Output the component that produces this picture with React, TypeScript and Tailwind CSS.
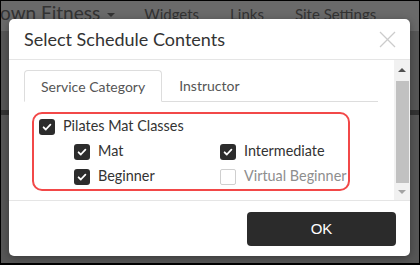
import React from 'react';

function Check({ checked }: { checked: boolean }): React.ReactElement {
  if (!checked) {
    return <span className="block w-[16px] h-[16px] rounded-[2px] border border-[#cfcfcf] bg-white shrink-0" />;
  }
  return (
    <span className="flex items-center justify-center w-[16px] h-[16px] rounded-[3px] bg-[#2c2c2c] shrink-0">
      <svg width="12" height="12" viewBox="0 0 12 12" fill="none" stroke="white" strokeWidth="1.8" strokeLinecap="round" strokeLinejoin="round">
        <path d="M2.6 6.3l2.2 2.2 4.6-4.8" />
      </svg>
    </span>
  );
}

function Item({ label, checked, muted }: { label: string; checked: boolean; muted?: boolean }): React.ReactElement {
  return (
    <label className="flex items-center gap-[8px] h-[25px] whitespace-nowrap">
      <Check checked={checked} />
      <span className={`text-[14.4px] leading-none ${muted ? 'text-[#8e8e8e]' : 'text-[#333]'}`}>{label}</span>
    </label>
  );
}

export default function App(): React.ReactElement {
  return (
    <div className="relative w-[420px] h-[265px] overflow-hidden border border-b-2 border-black bg-[#575757] font-['Lato',sans-serif]">
      {/* Page behind the modal */}
      <div className="h-[30px] bg-[#6a6a6a] flex items-start text-[#333] whitespace-nowrap">
        <span className="text-[19px] leading-[22px] ml-[-1px] mt-[1px]">own Fitness</span>
        <span className="ml-[7px] mt-[12px] w-0 h-0 border-l-[4px] border-r-[4px] border-t-[4px] border-l-transparent border-r-transparent border-t-[#333]" />
        <span className="ml-[29px] mt-[3px] text-[15px] leading-[20px]">Widgets</span>
        <span className="ml-[31px] mt-[3px] text-[15px] leading-[20px]">Links</span>
        <span className="ml-[31px] mt-[3px] text-[15px] leading-[20px]">Site Settings</span>
      </div>
      <div className="mt-[79px] h-[5px] bg-[#333]" />

      {/* Overlay + modal */}
      <div className="absolute inset-0 pl-[8px] pt-[18px]">
        <div className="w-[401px] h-[237px] bg-white rounded-[5px] shadow-[0_2px_8px_rgba(0,0,0,0.35)] flex flex-col overflow-hidden">
          {/* Header */}
          <div className="h-[41px] shrink-0 flex items-center justify-between pl-[15px] pr-[14px] border-b border-[#e5e5e5]">
            <h2 className="text-[18px] text-[#333] leading-none pb-[1px]">Select Schedule Contents</h2>
            <svg width="17" height="17" viewBox="0 0 17 17" stroke="#cccccc" strokeWidth="1.3" fill="none">
              <line x1="1" y1="1" x2="16" y2="16" />
              <line x1="16" y1="1" x2="1" y2="16" />
            </svg>
          </div>

          {/* Body */}
          <div className="h-[141px] shrink-0 flex border-b border-[#e5e5e5]">
            <div className="flex-1 pl-[15px] pr-[16px] pt-[10px] overflow-hidden">
              <div className="flex border-b border-[#dddddd] h-[32px]">
                <div className="h-[32px] -mb-px px-[16px] flex items-center border border-[#dddddd] border-b-white rounded-t-[4px] bg-white text-[14px] text-[#555]">
                  Service Category
                </div>
                <div className="h-[31px] px-[17px] flex items-center text-[14px] text-[#555]">Instructor</div>
              </div>
              <div className="ml-[8px] mt-[10px] w-[318px] h-[79px] border-2 border-[#f24848] rounded-[10px] pl-[5px]">
                <Item label="Pilates Mat Classes" checked />
                <div className="grid grid-cols-[146px_1fr] pl-[35px]">
                  <Item label="Mat" checked />
                  <Item label="Intermediate" checked />
                  <Item label="Beginner" checked />
                  <Item label="Virtual Beginner" checked={false} muted />
                </div>
              </div>
            </div>
            {/* Scrollbar */}
            <div className="w-[16px] shrink-0 bg-[#f1f1f1] flex flex-col items-center">
              <div className="h-[20px] flex items-center justify-center">
                <span className="w-0 h-0 border-l-[4px] border-r-[4px] border-b-[4px] border-l-transparent border-r-transparent border-b-[#505050]" />
              </div>
              <div className="w-[13px] h-[102px] mt-[1px] bg-[#c1c1c1]" />
              <div className="flex-1 flex items-center justify-center">
                <span className="w-0 h-0 border-l-[4px] border-r-[4px] border-t-[4px] border-l-transparent border-r-transparent border-t-[#a3a3a3]" />
              </div>
            </div>
          </div>

          {/* Footer */}
          <div className="flex-1 flex justify-end items-start pt-[11px] pr-[14px]">
            <button className="w-[149px] h-[34px] rounded-[4px] bg-[#2b2b2b] text-white text-[15px] font-['Liberation_Sans',Arial,sans-serif]">
              OK
            </button>
          </div>
        </div>
      </div>
    </div>
  );
}
